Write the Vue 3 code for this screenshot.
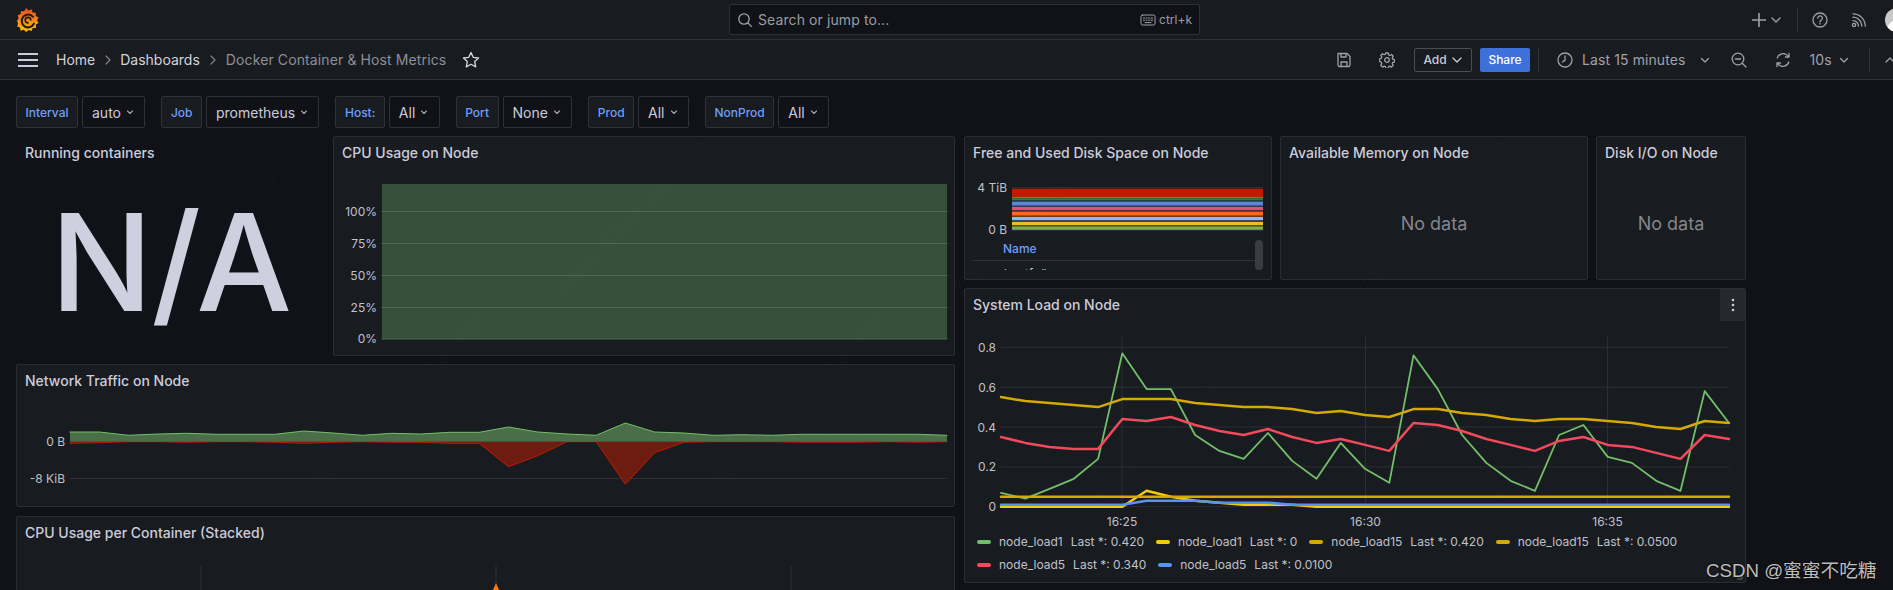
<script setup>
const variables = [
  { label: 'Interval', value: 'auto' },
  { label: 'Job', value: 'prometheus' },
  { label: 'Host:', value: 'All' },
  { label: 'Port', value: 'None' },
  { label: 'Prod', value: 'All' },
  { label: 'NonProd', value: 'All' }
]

const cpuTicks = [
  { label: '100%', y: 211.5 },
  { label: '75%', y: 243.5 },
  { label: '50%', y: 275.5 },
  { label: '25%', y: 307.5 },
  { label: '0%', y: 339 }
]

const diskBands = [
  { y: 188.7, h: 8.3, c: '#bf1b00' },
  { y: 197, h: 1.4, c: '#8a7a22' },
  { y: 198.4, h: 2, c: '#2f7d4f' },
  { y: 200.4, h: 1.3, c: '#2a3d55' },
  { y: 201.7, h: 4, c: '#5b86d6' },
  { y: 205.7, h: 1.3, c: '#3a3a55' },
  { y: 207, h: 3.4, c: '#e0507a' },
  { y: 210.4, h: 1.3, c: '#5a2a38' },
  { y: 211.7, h: 4, c: '#ff6a18' },
  { y: 215.7, h: 1.3, c: '#6d3d10' },
  { y: 217, h: 3.4, c: '#8ab8ff' },
  { y: 220.4, h: 1.6, c: '#3c4250' },
  { y: 222, h: 3.4, c: '#e8c020' },
  { y: 225.4, h: 1, c: '#4e4a1c' },
  { y: 226.4, h: 3.4, c: '#7fb04a' }
]

const netX = i => 70 + i * (877 / 30)
const zy = z => 360 + z / 3
const greenZ = [216, 216, 226, 222, 220, 223, 223, 223, 213, 219, 226, 220, 222, 217, 217, 201, 216, 222, 226, 189, 216, 219, 226, 224, 226, 223, 223, 223, 223, 223, 226]
const redZ = [250, 248, 245, 245, 247, 245, 245, 247, 250, 247, 245, 247, 247, 250, 250, 320, 287, 245, 245, 373, 278, 247, 245, 245, 245, 247, 247, 247, 245, 247, 245]
const line = (arr, fx, fy) => arr.map((v, i) => `${fx(i).toFixed(1)},${fy(v).toFixed(1)}`).join(' ')
const netBase = 441.7
const greenLine = line(greenZ, netX, zy)
const redLine = line(redZ, netX, zy)
const greenArea = `70,${netBase} ${greenLine} 947,${netBase}`
const redArea = `70,${netBase} ${redLine} 947,${netBase}`

const sysX = i => 1001 + i * (728 / 30)
const sysY = v => 506.7 - v * 199.25
const flat = (v, n) => Array.from(new Array(n), () => v)
const series = [
  { name: 'node_load1', last: '0.420', color: '#73bf69', w: 1.8, data: [0.07, 0.04, 0.09, 0.14, 0.24, 0.77, 0.59, 0.59, 0.36, 0.28, 0.24, 0.37, 0.23, 0.14, 0.32, 0.19, 0.12, 0.76, 0.59, 0.36, 0.22, 0.13, 0.08, 0.36, 0.41, 0.25, 0.22, 0.13, 0.08, 0.58, 0.42] },
  { name: 'node_load1', last: '0', color: '#f2cc0c', w: 2.5, data: [0, 0, 0, 0, 0, 0, 0.08, 0.05, 0.03, 0.02, 0.01, 0.01, 0.01, ...flat(0, 18)] },
  { name: 'node_load15', last: '0.420', color: '#d4a900', w: 2.5, data: [0.55, 0.53, 0.52, 0.51, 0.5, 0.54, 0.54, 0.54, 0.52, 0.51, 0.5, 0.5, 0.49, 0.47, 0.48, 0.46, 0.45, 0.49, 0.49, 0.47, 0.46, 0.44, 0.43, 0.44, 0.44, 0.43, 0.42, 0.4, 0.39, 0.43, 0.42] },
  { name: 'node_load15', last: '0.0500', color: '#d4a900', w: 2.5, data: flat(0.05, 31) },
  { name: 'node_load5', last: '0.340', color: '#f2495c', w: 2.5, data: [0.35, 0.32, 0.3, 0.29, 0.29, 0.44, 0.43, 0.45, 0.41, 0.38, 0.36, 0.39, 0.35, 0.32, 0.34, 0.31, 0.28, 0.42, 0.41, 0.38, 0.34, 0.31, 0.28, 0.33, 0.35, 0.31, 0.3, 0.27, 0.24, 0.36, 0.34] },
  { name: 'node_load5', last: '0.0100', color: '#5794f2', w: 2.5, data: [0.01, 0.01, 0.01, 0.01, 0.01, 0.01, 0.03, 0.03, 0.03, 0.02, 0.02, 0.02, ...flat(0.01, 19)] }
].map(s => ({ ...s, points: line(s.data, sysX, sysY) }))

const sysYTicks = [
  { label: '0.8', y: 347.3 },
  { label: '0.6', y: 387.2 },
  { label: '0.4', y: 427 },
  { label: '0.2', y: 466.9 },
  { label: '0', y: 506.7 }
]
const sysXTicks = [
  { label: '16:25', x: 1122 },
  { label: '16:30', x: 1365.5 },
  { label: '16:35', x: 1607.5 }
]

const marks = []
for (const top of [190, 400]) {
  for (let left = top === 190 ? 120 : 260; left < 1600; left += 400) {
    marks.push({ left: `${left}px`, top: `${top}px` })
  }
}
</script>

<template>
  <div class="page">
    <header class="topbar">
      <div class="logo-cell">
        <svg class="logo" viewBox="0 0 24 26">
          <defs>
            <linearGradient id="gf" x1="0" y1="0" x2="0" y2="1">
              <stop offset="0" stop-color="#f0481e" />
              <stop offset="1" stop-color="#fcc30b" />
            </linearGradient>
          </defs>
          <path fill="url(#gf)" d="M10 0l2.6 2.6L16 1.4l1 3.4 3.6.4-.2 3.4 3.2 1.8-1.8 3 1.8 3-3 1.6.2 3.6-3.6.2-1.4 3.2-3.2-1.2L10 26l-2.6-2.4-3.4 1-.8-3.4-3-1.2 1-3.2L0 14l1.8-3-1-3.2 3-1.2.6-3.4 3.4.2z" />
          <path fill="none" stroke="#181b1f" stroke-width="2.2" stroke-linecap="round" d="M17.5 9.5a7 7 0 1 0 1 7.5" />
          <path fill="none" stroke="#181b1f" stroke-width="1.8" stroke-linecap="round" d="M15 13a3 3 0 1 0-3 3.2" />
        </svg>
      </div>
      <div class="search">
        <svg class="ic16 dim" viewBox="0 0 16 16"><circle cx="7" cy="7" r="5.2" /><path d="M11 11l3.4 3.4" /></svg>
        <span class="search-text">Search or jump to...</span>
        <svg class="kbd" viewBox="0 0 16 14"><rect x="1" y="2" width="14" height="10" rx="1.5" /><path d="M3.5 5h1M6 5h1M8.5 5h1M11 5h1.5M3.5 7.2h1M6 7.2h1M8.5 7.2h1M11 7.2h1.5M5 9.6h6" /></svg>
        <span class="kbd-text">ctrl+k</span>
      </div>
      <div class="top-actions">
        <svg class="top-plus" viewBox="0 0 14 14"><path d="M7 0v14M0 7h14" /></svg>
        <svg class="chev top-chev" viewBox="0 0 12 12"><path d="M2 4l4 4 4-4" /></svg>
        <i class="divider top-div"></i>
        <svg class="ic16 dim top-help" viewBox="0 0 16 16"><circle cx="8" cy="8" r="7" /><path d="M5.8 6.2a2.3 2.3 0 1 1 3.4 2c-.8.4-1.2.8-1.2 1.6M8 11.4v.6" /></svg>
        <svg class="ic16 dim top-rss" viewBox="0 0 16 16"><circle cx="3" cy="13" r="1.6" /><path d="M2 8.6a5.4 5.4 0 0 1 5.4 5.4M2 5.2A8.8 8.8 0 0 1 10.8 14M2 1.8A12.2 12.2 0 0 1 14.2 14" /></svg>
        <span class="avatar"></span>
      </div>
    </header>

    <nav class="navbar">
      <svg class="burger" viewBox="0 0 20 14"><path d="M0 1h20M0 7h20M0 13h20" /></svg>
      <span class="crumb crumb-home">Home</span>
      <svg class="sep" viewBox="0 0 8 10"><path d="M2 1l4 4-4 4" /></svg>
      <span class="crumb">Dashboards</span>
      <svg class="sep sep-last" viewBox="0 0 8 10"><path d="M2 1l4 4-4 4" /></svg>
      <span class="crumb current">Docker Container &amp; Host Metrics</span>
      <svg class="star" viewBox="0 0 16 16"><path d="M8 1.3l2 4.3 4.7.6-3.4 3.2.9 4.7L8 11.8l-4.2 2.3.9-4.7L1.3 6.2 6 5.6z" /></svg>

      <div class="nav-actions">
        <svg class="ic16 dim save" viewBox="0 0 16 16"><path d="M2 1.5h9l3 3V13a1.5 1.5 0 0 1-1.5 1.5h-9A1.5 1.5 0 0 1 2 13zM5 14.5V10h6v4.5M5 1.5V5h5V1.5" /></svg>
        <svg class="ic16 dim gear" viewBox="0 0 16 16"><circle cx="8" cy="8" r="2.3" /><path d="M6.8 1h2.4l.4 1.9 1.3.6 1.7-1 1.6 1.7-1 1.6.5 1.4 1.9.4v2.4l-1.9.4-.5 1.3 1 1.7-1.6 1.7-1.7-1-1.3.5-.4 1.9H6.8l-.4-1.9-1.3-.5-1.7 1-1.6-1.7 1-1.7-.5-1.3L.4 9.2V6.8l1.9-.4.5-1.4-1-1.6 1.6-1.7 1.7 1 1.3-.6z" /></svg>
        <span class="add-btn">Add<svg class="chev" viewBox="0 0 12 12"><path d="M2 4l4 4 4-4" /></svg></span>
        <span class="share-btn">Share</span>
        <i class="divider nav-div1"></i>
        <svg class="ic16 dim clock" viewBox="0 0 16 16"><circle cx="8" cy="8" r="7" /><path d="M8 4v4.4L5.4 10" /></svg>
        <span class="time">Last 15 minutes</span>
        <svg class="chev time-chev" viewBox="0 0 12 12"><path d="M2.5 4.5l3.5 3.5 3.5-3.5" /></svg>
        <svg class="ic16 dim zoomout" viewBox="0 0 16 16"><circle cx="7" cy="7" r="5.8" /><path d="M4.4 7h5.2M11.2 11.2L15 15" /></svg>
        <svg class="ic16 dim refresh" viewBox="0 0 16 16"><path d="M2.2 6a6.2 6.2 0 0 1 10.4-2.4L14 5M13.8 10a6.2 6.2 0 0 1-10.4 2.4L2 11M14 1.4V5h-3.6M2 14.6V11h3.6" /></svg>
        <span class="time refresh-val">10s</span>
        <svg class="chev refresh-chev" viewBox="0 0 12 12"><path d="M2.5 4.5l3.5 3.5 3.5-3.5" /></svg>
        <i class="divider nav-div2"></i>
        <svg class="chev collapse" viewBox="0 0 12 12"><path d="M2 8l4-4 4 4" /></svg>
      </div>
    </nav>

    <main class="content">
      <section class="vars">
        <div v-for="v in variables" :key="v.label" class="var">
          <span class="var-label">{{ v.label }}</span>
          <span class="var-value">{{ v.value }}<svg class="chev small" viewBox="0 0 12 12"><path d="M3.5 5L6 7.5 8.5 5" /></svg></span>
        </div>
      </section>

      <section class="grid">
        <div class="col">
          <div class="row-top">
            <article class="panel transparent running">
              <h2 class="title">Running containers</h2>
              <div class="stat">N/A</div>
            </article>
            <article class="panel cpu">
              <h2 class="title">CPU Usage on Node</h2>
              <svg class="chart" viewBox="334 169 620 186">
                <rect x="382" y="184" width="565" height="155" fill="#37503a" />
                <line v-for="t in cpuTicks" :key="t.label" x1="382" x2="947" :y1="t.y" :y2="t.y" stroke="#4c6a4f" />
                <text v-for="t in cpuTicks" :key="t.label + 't'" x="377" :y="t.y + 4" class="axis end">{{ t.label }}</text>
              </svg>
            </article>
          </div>

          <article class="panel network">
            <h2 class="title">Network Traffic on Node</h2>
            <svg class="chart" viewBox="17 397 937 109">
              <line x1="70" x2="947" y1="478.5" y2="478.5" stroke="#2e3036" />
              <text x="65" y="446" class="axis end">0 B</text>
              <text x="65" y="482.5" class="axis end">-8 KiB</text>
              <polygon :points="redArea" fill="#6e1c10" />
              <polyline :points="redLine" fill="none" stroke="#bf1b00" />
              <polygon :points="greenArea" fill="#4a6f48" />
              <polyline :points="greenLine" fill="none" stroke="#73bf69" />
            </svg>
          </article>

          <article class="panel stacked">
            <h2 class="title">CPU Usage per Container (Stacked)</h2>
            <svg class="chart" viewBox="17 549 937 100">
              <line x1="201" x2="201" y1="566" y2="649" stroke="#2e3036" />
              <line x1="496" x2="496" y1="566" y2="649" stroke="#2e3036" />
              <line x1="791" x2="791" y1="566" y2="649" stroke="#2e3036" />
              <polygon points="492,592 496,583 500,592" fill="#ff780a" />
            </svg>
          </article>
        </div>

        <div class="col">
          <div class="row-three">
            <article class="panel disk">
              <h2 class="title">Free and Used Disk Space on Node</h2>
              <svg class="disk-chart" viewBox="965 169 306 71">
                <line x1="1012" x2="1263" y1="187.5" y2="187.5" stroke="#2e3036" />
                <line x1="1012" x2="1263" y1="230.5" y2="230.5" stroke="#2e3036" />
                <rect v-for="b in diskBands" :key="b.y" x="1012" :y="b.y" width="251" :height="b.h" :fill="b.c" />
                <text x="1007" y="191.5" class="axis end">4 TiB</text>
                <text x="1007" y="234" class="axis end">0 B</text>
              </svg>
              <div class="disk-table">
                <div class="th">Name</div>
                <div class="td">/rootfs/home</div>
                <span class="thumb"></span>
              </div>
            </article>
            <article class="panel empty">
              <h2 class="title">Available Memory on Node</h2>
              <div class="nodata">No data</div>
            </article>
            <article class="panel empty">
              <h2 class="title">Disk I/O on Node</h2>
              <div class="nodata">No data</div>
            </article>
          </div>

          <article class="panel system">
            <h2 class="title">System Load on Node</h2>
            <span class="kebab"><svg viewBox="0 0 4 16"><circle cx="2" cy="3" r="1.3" /><circle cx="2" cy="8" r="1.3" /><circle cx="2" cy="13" r="1.3" /></svg></span>
            <svg class="sys-chart" viewBox="965 321 780 209">
              <line v-for="t in sysYTicks" :key="t.label" x1="1001" x2="1729" :y1="t.y" :y2="t.y" stroke="#2c2f34" />
              <line v-for="t in sysXTicks" :key="t.label" :x1="t.x" :x2="t.x" y1="337" y2="507" stroke="#2c2f34" />
              <text v-for="t in sysYTicks" :key="t.label + 't'" x="996" :y="t.y + 4.5" class="axis end">{{ t.label }}</text>
              <text v-for="t in sysXTicks" :key="t.label + 'x'" :x="t.x" y="526" class="axis mid">{{ t.label }}</text>
              <polyline v-for="s in series" :key="s.name + s.last" :points="s.points" fill="none" :stroke="s.color" :stroke-width="s.w" />
            </svg>
            <div class="legend">
              <div v-for="s in series" :key="s.name + s.last + 'l'" class="legend-item">
                <i class="swatch" :style="{ background: s.color }"></i>
                <span>{{ s.name }}</span>
                <span>Last *: {{ s.last }}</span>
              </div>
            </div>
            <svg class="resize" viewBox="0 0 6 6"><path d="M5 0v5H0" /></svg>
          </article>
        </div>
      </section>
    </main>

    <div v-for="m in marks" :key="m.left + m.top" class="mark" :style="m">zhaolei, 10.10.8.1 &nbsp; 2024-03-07, 16:37</div>

    <div class="csdn">CSDN @蜜蜜不吃糖</div>
  </div>
</template>

<style>
html, body { margin: 0; background: #111217; }
</style>

<style scoped>
.page {
  position: relative;
  width: 1893px;
  height: 590px;
  overflow: hidden;
  background: #111217;
  color: #ccccdc;
  font-family: Inter, "Noto Sans", sans-serif;
  font-size: 14px;
}
svg { display: block; flex: none; fill: none; stroke-linecap: round; stroke-linejoin: round; }
.ic16 { width: 16px; height: 16px; stroke: currentColor; stroke-width: 1.3; }
.dim { color: #a0a1aa; }

.topbar {
  display: grid;
  grid-template-columns: 729px 471px 1fr;
  align-items: center;
  height: 39px;
  background: #181b1f;
  border-bottom: 1px solid #2f3137;
}
.logo-cell { padding-left: 17px; }
.logo { width: 22px; height: 24px; }
.search {
  display: flex;
  align-items: center;
  height: 31px;
  box-sizing: border-box;
  padding: 0 7px;
  background: #111217;
  border: 1px solid #2f3137;
  border-radius: 2px;
}
.search-text { margin-left: 5px; color: #9a9ca5; letter-spacing: .1px; }
.kbd { width: 16px; height: 14px; margin-left: auto; stroke: #a0a1aa; stroke-width: 1; }
.kbd-text { margin-left: 3px; font-size: 12px; color: #9a9ca5; }
.top-actions { display: flex; align-items: center; height: 100%; overflow: hidden; }
.top-plus { width: 14px; height: 14px; margin-left: 552px; stroke: #a0a1aa; stroke-width: 1.6; }
.chev { width: 12px; height: 12px; stroke: #a0a1aa; stroke-width: 1.3; }
.top-chev { margin-left: 4px; }
.divider { display: block; flex: none; width: 1px; height: 24px; background: #2f3137; }
.top-div { margin-left: 15px; }
.top-help { margin-left: 14px; }
.top-rss { margin-left: 23px; }
.avatar {
  flex: none;
  width: 24px;
  height: 24px;
  margin-left: 18px;
  border-radius: 50%;
  background: radial-gradient(circle at 60% 100%, #fff 45%, #c9c9c9 47%);
}

.navbar {
  display: flex;
  align-items: center;
  height: 40px;
  box-sizing: border-box;
  background: #181b1f;
  border-bottom: 1px solid #2f3137;
  padding-left: 18px;
}
.burger { width: 20px; height: 14px; stroke: #ccccdc; stroke-width: 2; stroke-linecap: butt; margin-right: 18px; }
.crumb { color: #d2d3dc; white-space: nowrap; }
.crumb.current { color: #8e8f97; letter-spacing: .11px; }
.sep { width: 8px; height: 10px; margin: 0 8.5px; stroke: #83848c; stroke-width: 1.2; }
.sep-last { margin: 0 9px; }
.star { width: 18px; height: 18px; margin-left: 16px; stroke: #d2d3dc; stroke-width: 1.2; }
.nav-actions { display: flex; align-items: center; margin-left: auto; width: 560px; height: 100%; flex: none; overflow: hidden; }
.nav-actions > * { flex: none; }
.save { margin-left: 3px; }
.gear { margin-left: 27px; }
.add-btn {
  display: flex;
  align-items: center;
  justify-content: center;
  gap: 4px;
  width: 58px;
  height: 24px;
  box-sizing: border-box;
  margin-left: 19px;
  border: 1px solid #4a4c52;
  border-radius: 2px;
  font-size: 12px;
  font-weight: 500;
}
.add-btn .chev { stroke: #ccccdc; }
.share-btn {
  display: flex;
  align-items: center;
  justify-content: center;
  width: 50px;
  height: 24px;
  margin-left: 8px;
  background: #3d71d9;
  border-radius: 2px;
  color: #fff;
  font-size: 12px;
  font-weight: 500;
}
.nav-div1 { margin-left: 8px; }
.clock { margin-left: 18px; }
.time { color: #a0a1aa; white-space: nowrap; letter-spacing: .1px; }
.clock + .time { margin-left: 9px; }
.time-chev { margin-left: 13px; }
.zoomout { margin-left: 20px; }
.refresh { margin-left: 28px; }
.refresh-val { margin-left: 19px; }
.refresh-chev { margin-left: 6px; }
.nav-div2 { margin-left: 19px; }
.collapse { margin-left: 14px; }

.content { padding: 16px 16px 0; }
.vars { display: flex; gap: 16px; height: 32px; margin-bottom: 8px; }
.var { display: flex; gap: 4px; }
.var-label, .var-value {
  display: flex;
  align-items: center;
  box-sizing: border-box;
  height: 32px;
  border: 1px solid #2f3137;
  border-radius: 2px;
  white-space: nowrap;
}
.var-label {
  padding: 0 8.5px;
  background: #181b1f;
  color: #6e9fff;
  font-size: 12px;
  font-weight: 500;
}
.var-value { padding: 0 8.4px 0 9px; background: #111217; gap: 3px; }
.small { stroke: #a8a9b2; stroke-width: 1.1; }

.grid { display: grid; grid-template-columns: 939px 782px; column-gap: 9px; align-items: start; }
.col { display: flex; flex-direction: column; gap: 8px; }
.row-top { display: grid; grid-template-columns: 309px 622px; gap: 8px; height: 220px; }
.row-three { display: grid; grid-template-columns: 308px 308px 150px; column-gap: 8px; height: 144px; }
.panel {
  position: relative;
  box-sizing: border-box;
  background: #181b1f;
  border: 1px solid #2b2d33;
  border-radius: 2px;
  overflow: hidden;
}
.panel.transparent { background: transparent; border-color: transparent; }
.title {
  margin: 0;
  height: 32px;
  padding: 0 8px;
  font-size: 14px;
  font-weight: 500;
  line-height: 32px;
  color: #ccccdc;
  white-space: nowrap;
}
.chart, .sys-chart, .disk-chart { width: 100%; }
.chart text, .sys-chart text, .disk-chart text { font-family: Inter, sans-serif; }
.running { display: flex; flex-direction: column; }
.stat {
  flex: 1;
  display: flex;
  align-items: center;
  justify-content: center;
  font-size: 135px;
  font-weight: 500;
  line-height: 1;
  letter-spacing: -1.5px;
  color: #cfcfe0;
}
.axis { fill: #c0c1cb; stroke: none; font-size: 12px; }
.end { text-anchor: end; }
.mid { text-anchor: middle; }
.network { height: 143px; }
.stacked { height: 200px; margin-top: 1px; }
.cpu .chart { height: 186px; }
.network .chart { height: 109px; }
.stacked .chart { height: 100px; }
.disk-chart { height: 71px; }
.disk-table { position: relative; height: 30px; margin-left: 7px; width: 291px; overflow: hidden; font-size: 12px; }
.th {
  height: 21px;
  line-height: 17px;
  box-sizing: border-box;
  padding-left: 31px;
  border-bottom: 1px solid #2f3137;
  color: #6e9fff;
  font-weight: 500;
}
.td { padding-left: 30px; padding-top: 5px; color: #ccccdc; }
.thumb { position: absolute; right: 0; top: 0; width: 8px; height: 30px; border-radius: 4px; background: #3a3c42; }
.empty { display: flex; flex-direction: column; }
.nodata {
  flex: 1;
  display: flex;
  align-items: center;
  justify-content: center;
  font-size: 18px;
  color: #85868e;
  padding-bottom: 1px;
}
.system { height: 295px; }
.kebab {
  position: absolute;
  right: 0;
  top: 0;
  display: flex;
  align-items: center;
  justify-content: center;
  width: 25px;
  height: 32px;
  background: #25282d;
}
.kebab svg { width: 4px; height: 16px; fill: #ccccdc; }
.sys-chart { height: 209px; }
.legend { display: flex; flex-wrap: wrap; padding-left: 12px; column-gap: 12px; font-size: 12px; }
.legend-item { display: flex; align-items: center; height: 23px; white-space: nowrap; color: #c0c1cb; }
.legend-item span + span { margin-left: 8px; }
.swatch { flex: none; width: 14px; height: 4px; border-radius: 2px; margin-right: 8px; }
.resize { position: absolute; right: 2px; bottom: 2px; width: 6px; height: 6px; stroke: #6a6b72; stroke-width: 1; }

.mark {
  position: absolute;
  font-size: 15px;
  font-style: italic;
  white-space: nowrap;
  color: rgba(204, 204, 220, 0.03);
  transform: rotate(-45deg);
  pointer-events: none;
}
.csdn {
  position: absolute;
  left: 1706px;
  top: 559px;
  font-family: "Liberation Sans", "Noto Sans CJK SC", sans-serif;
  font-size: 18.7px;
  line-height: 24px;
  color: #bdbdbd;
  white-space: nowrap;
  text-shadow: 0 0 2px #000;
}
</style>
